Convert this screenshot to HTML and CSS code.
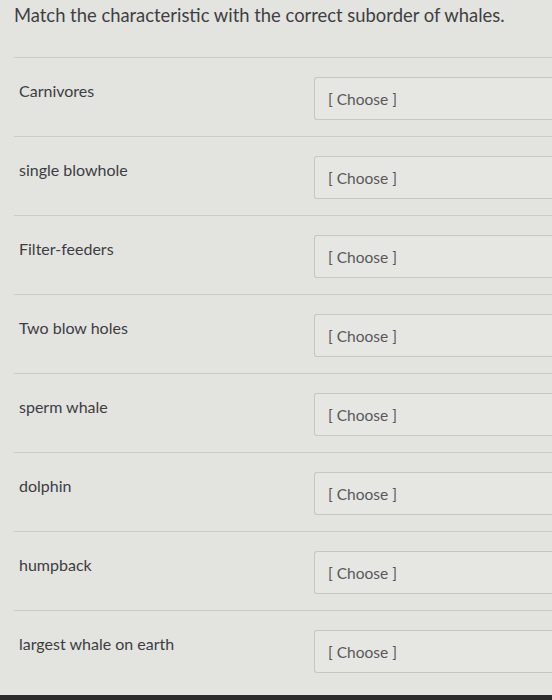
FILE: index.html
```html
<!doctype html>
<html>
<head>
    <meta charset="utf-8">
    <title>Match the characteristic</title>
    <link rel="stylesheet" href="styles.css">
</head>
<body>
    <div class="page">
        <h1 class="prompt">Match the characteristic with the correct suborder of whales.</h1>

        <div class="answers">
            <div class="row">
                <span class="label">Carnivores</span>
                <div class="choice">[ Choose ]</div>
            </div>
            <div class="row">
                <span class="label">single blowhole</span>
                <div class="choice">[ Choose ]</div>
            </div>
            <div class="row">
                <span class="label">Filter-feeders</span>
                <div class="choice">[ Choose ]</div>
            </div>
            <div class="row">
                <span class="label">Two blow holes</span>
                <div class="choice">[ Choose ]</div>
            </div>
            <div class="row">
                <span class="label">sperm whale</span>
                <div class="choice">[ Choose ]</div>
            </div>
            <div class="row">
                <span class="label">dolphin</span>
                <div class="choice">[ Choose ]</div>
            </div>
            <div class="row">
                <span class="label">humpback</span>
                <div class="choice">[ Choose ]</div>
            </div>
            <div class="row">
                <span class="label">largest whale on earth</span>
                <div class="choice">[ Choose ]</div>
            </div>
        </div>
    </div>
    <div class="bezel"></div>
</body>
</html>
```

FILE: styles.css
```css
html, body {
    margin: 0;
    height: 100%;
    overflow: hidden;
    background-color: #e3e3e0;
    font-family: Lato, 'Open Sans', sans-serif;
}

body {
    display: flex;
    flex-direction: column;
}

.page {
    flex: 1;
    padding-left: 14px;
}

.prompt {
    margin: 0;
    height: 57px;
    padding-top: 3px;
    box-sizing: border-box;
    font-size: 18.4px;
    font-weight: normal;
    line-height: 24px;
    color: #3f3f42;
}

.row {
    display: flex;
    justify-content: space-between;
    align-items: flex-start;
    height: 79px;
    box-sizing: border-box;
    border-top: 1px solid #cbcbc8;
    padding: 19px 0 0 5px;
}

.label {
    margin-top: 4px;
    font-size: 16px;
    line-height: 19px;
    color: #3d3d42;
}

.choice {
    width: 238px;
    height: 43px;
    box-sizing: border-box;
    border: 1px solid #c6c6c3;
    border-right: none;
    border-radius: 3px 0 0 3px;
    background-color: #e6e6e3;
    padding: 12px 0 0 13px;
    font-size: 15.5px;
    line-height: 18px;
    color: #58585c;
}

.bezel {
    height: 5px;
    background-color: #2b2b30;
}
```
